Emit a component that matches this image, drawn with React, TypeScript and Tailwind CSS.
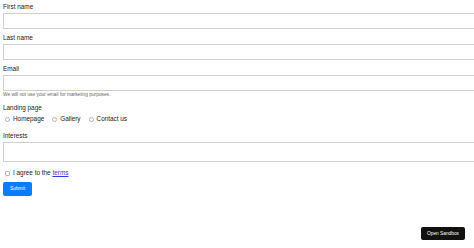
const font = { fontFamily: '"Liberation Sans", Arial, sans-serif' }

const Field = ({ label, tall }: { label: string; tall?: boolean }) => (
  <div className="flex flex-col">
    <label className="text-[6.4px] leading-[8px] text-[#222]">{label}</label>
    <div
      className={`mt-[2px] w-[490px] border border-[#cfcfcf] bg-white ${tall ? 'h-[20px]' : 'h-[16px]'}`}
    />
  </div>
)

const Radio = ({ label }: { label: string }) => (
  <label className="flex items-center gap-[3px]">
    <span className="h-[5px] w-[5px] rounded-full border border-[#b4b4b4] bg-white" />
    <span>{label}</span>
  </label>
)

export default function App() {
  return (
    <div className="relative h-[248px] w-[474px] overflow-hidden bg-white text-[#222]" style={font}>
      <form className="flex flex-col pl-[3px] pt-[3px]">
        <Field label="First name" />
        <div className="mt-[5px]">
          <Field label="Last name" />
        </div>
        <div className="mt-[5px]">
          <Field label="Email" />
        </div>
        <p className="mt-[1px] text-[4.8px] leading-[6px] text-[#666]">
          We will not use your email for marketing purposes.
        </p>
        <div className="mt-[6px] text-[6.4px] leading-[8px]">Landing page</div>
        <div className="mt-[3px] flex items-center gap-[8px] pl-[2px] text-[6.4px] leading-[8px]">
          <Radio label="Homepage" />
          <Radio label="Gallery" />
          <Radio label="Contact us" />
        </div>
        <div className="mt-[9px]">
          <Field label="Interests" tall />
        </div>
        <label className="mt-[7px] flex items-center gap-[3px] pl-[2px] text-[6.4px] leading-[8px]">
          <span className="h-[5px] w-[5px] rounded-[1px] border border-[#b4b4b4] bg-white" />
          <span>
            I agree to the <span className="text-[#2b3bd6] underline">terms</span>
          </span>
        </label>
        <button
          type="button"
          className="mt-[5px] h-[14px] w-[29px] rounded-[2px] bg-[#0a7cff] text-[4.8px] text-white"
        >
          Submit
        </button>
      </form>
      <button
        type="button"
        className="absolute bottom-[8px] right-[9px] h-[13px] w-[44px] rounded-[2px] bg-[#111] text-[4.8px] text-white"
      >
        Open Sandbox
      </button>
    </div>
  )
}
